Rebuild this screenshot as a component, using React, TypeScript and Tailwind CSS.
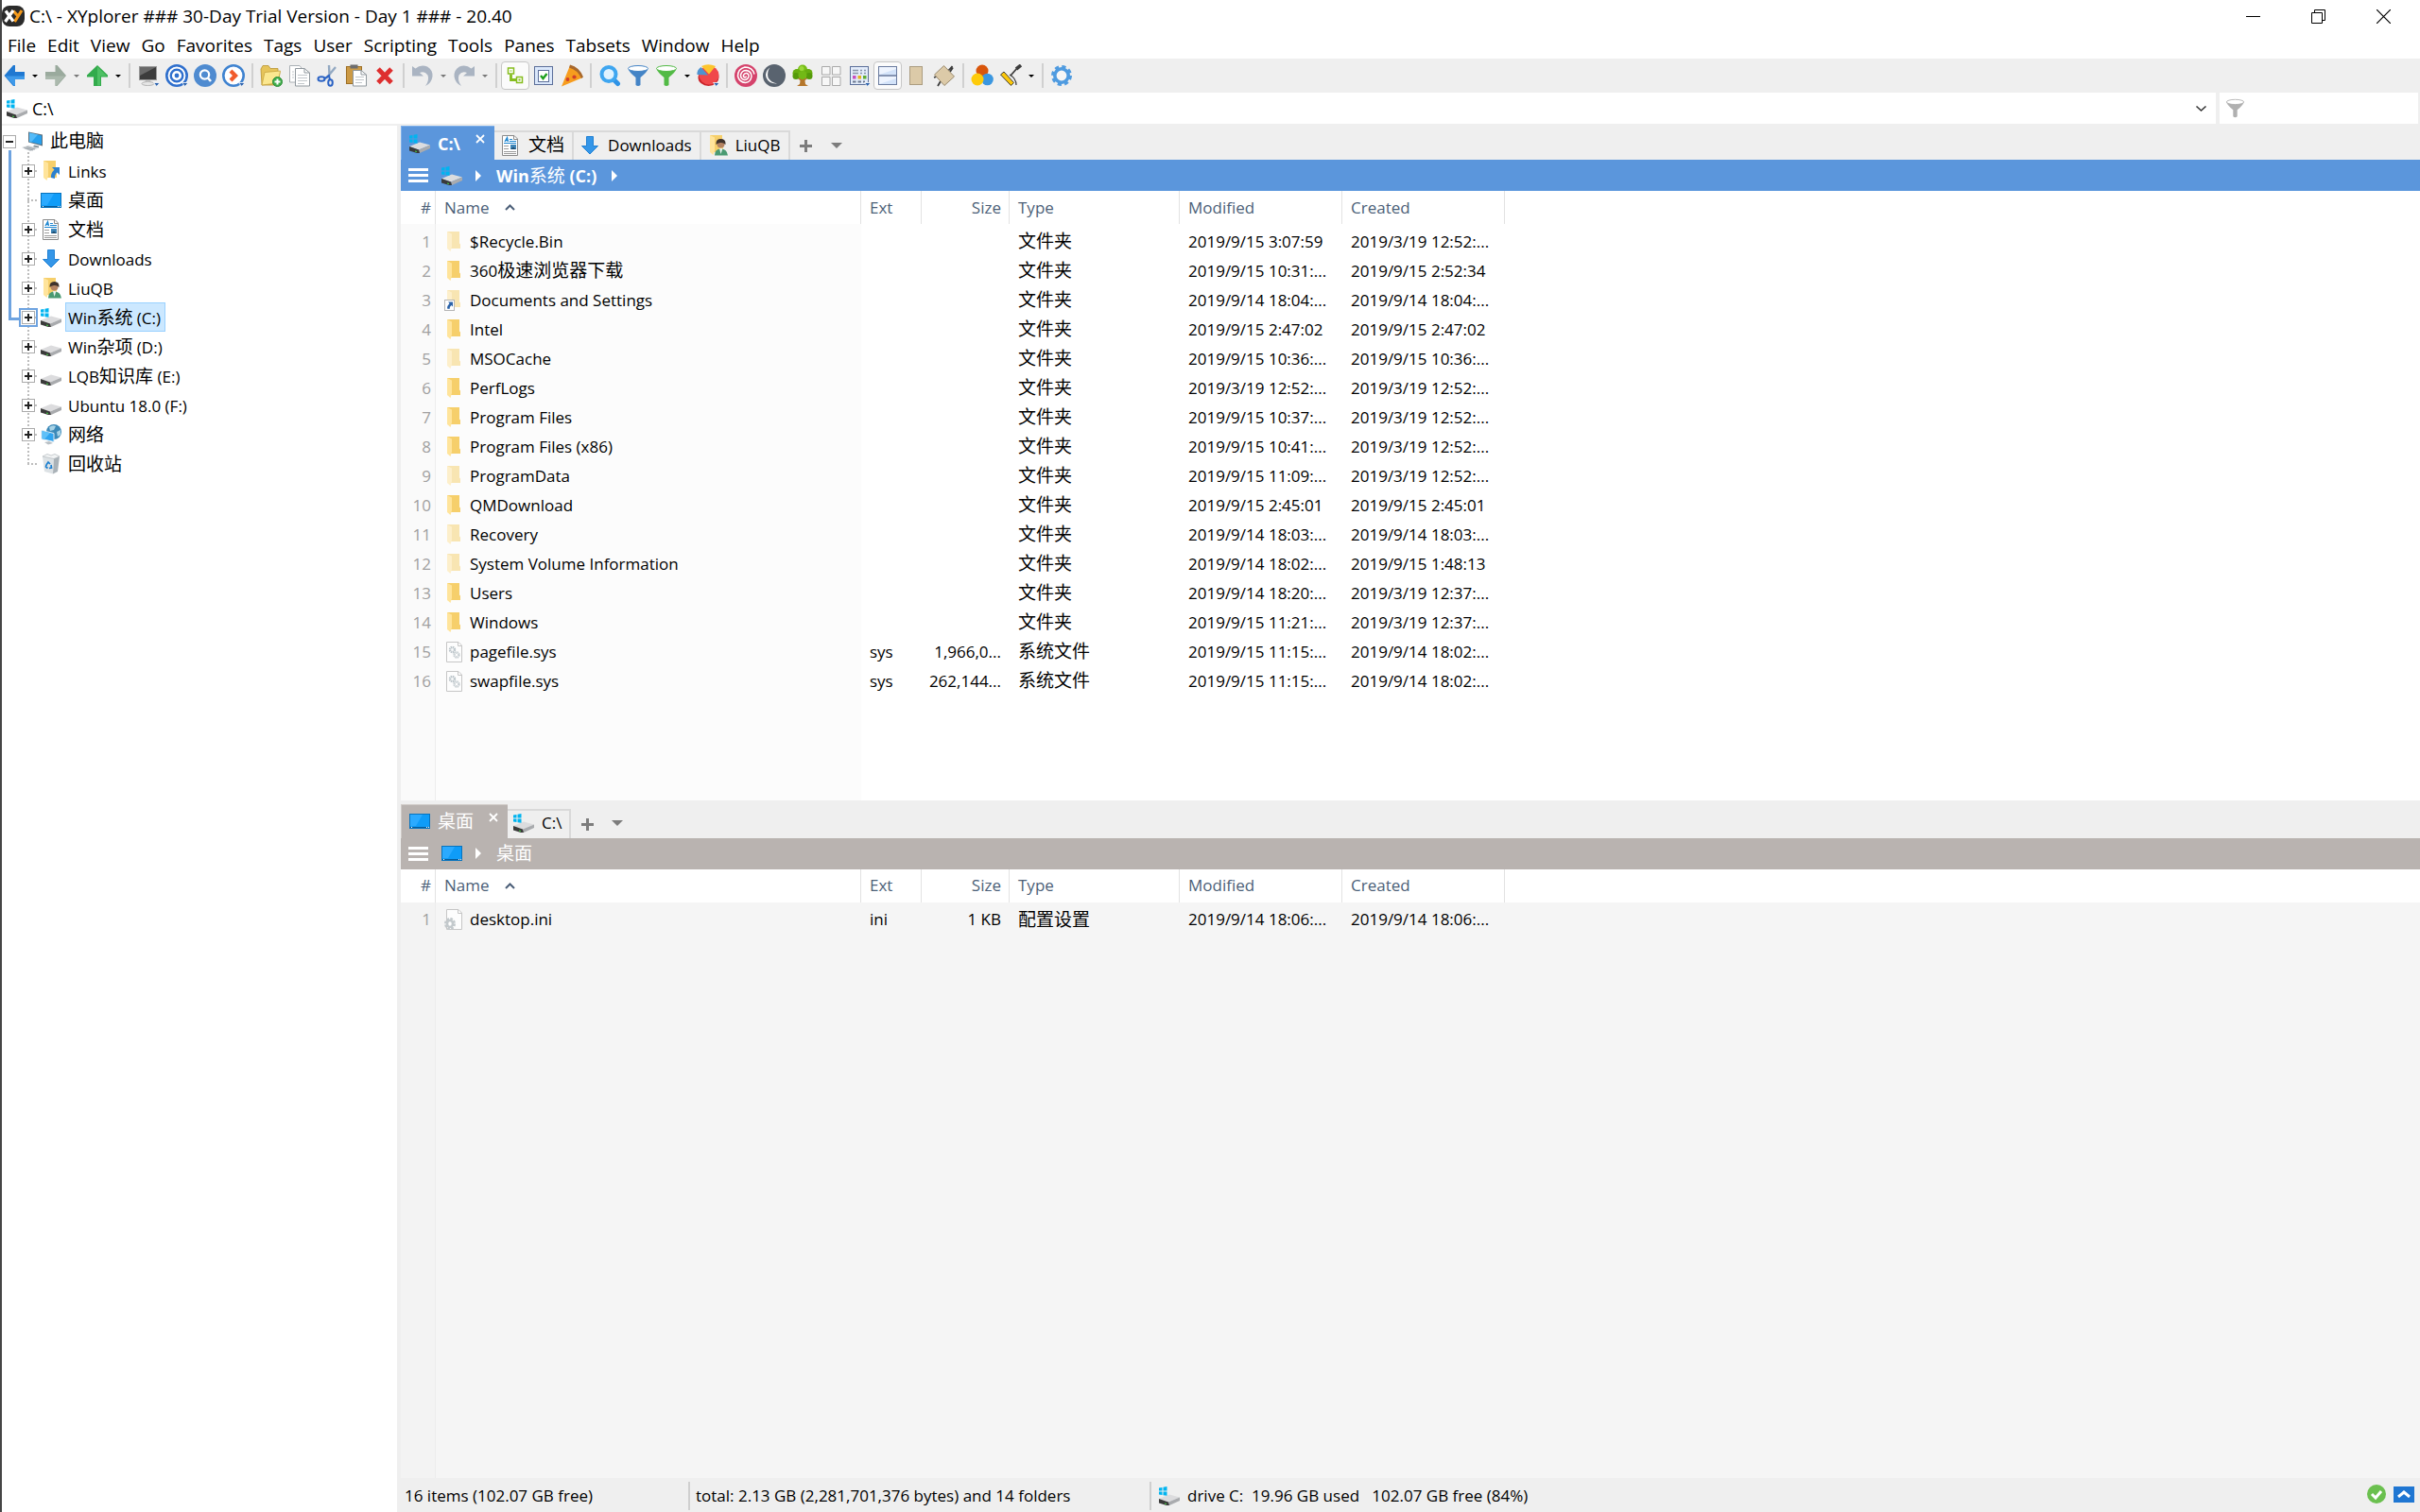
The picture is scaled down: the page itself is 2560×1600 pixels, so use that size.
import type { ReactNode } from 'react';
import clsx from 'clsx';

const menus = ['File', 'Edit', 'View', 'Go', 'Favorites', 'Tags', 'User', 'Scripting', 'Tools', 'Panes', 'Tabsets', 'Window', 'Help'];

type IconProps = { className?: string };

function Svg({ children, className = 'size-6', box = '0 0 24 24' }: { children: ReactNode; className?: string; box?: string }) {
  return (
    <svg viewBox={box} className={clsx('shrink-0', className)} fill="none" aria-hidden="true">
      {children}
    </svg>
  );
}

// Chinese runs are set a little larger than the Latin text around them
function Label({ text }: { text: string }) {
  return (
    <span className="whitespace-pre">
      {text.split(/([\u4e00-\u9fff]+)/).map((part, i) =>
        i % 2 ? (
          <span key={i} className="text-[19px] font-normal">
            {part}
          </span>
        ) : (
          part
        )
      )}
    </span>
  );
}

// ---------- file and place icons ----------

function DriveIcon({ windows, className = 'size-[22px]' }: IconProps & { windows?: boolean }) {
  return (
    <Svg className={className} box="0 0 22 22">
      <path d="M0 14 11 9.500 22 12.500 10 17.500Z" fill="#dcdcde" />
      <path d="M10 17.500 22 12.500V16L11 21Z" fill="#a9abae" />
      <path d="M0 14 10 17.500 11 21 8 21 0 18.500Z" fill="#3a3a3a" />
      <path d="M6 18.400 8 19V20L6 19.400Z" fill="#43d243" />
      {windows && (
        <path d="M0 2.500 3.500 2V5.500H0ZM4.500 1.800 8.500 1V5.500H4.500ZM0 6.500H3.500V10L0 9.500ZM4.500 6.500H8.500V10.800L4.500 10.200Z" fill="#00b4f0" />
      )}
    </Svg>
  );
}

function DesktopIcon() {
  return (
    <Svg className="size-[22px]" box="0 0 22 22">
      <rect x="0.500" y="3.500" width="21" height="15" fill="#0f9cf8" stroke="#0873bd" />
      <path d="M1 4H14L7 16H1Z" fill="#2baaff" />
      <path d="M1 17.500H21" stroke="#075c9c" />
      <path d="M2 17.500H3M18 17.500H19M20 17.500H21" stroke="#fff" />
    </Svg>
  );
}

function DocumentsIcon() {
  return (
    <Svg className="size-[22px]" box="0 0 22 22">
      <path d="M2.500 0.500H15L18.500 4V21.500H2.500Z" fill="#fff" stroke="#8b8b8b" />
      <path d="M14.500 0.500V4.500H18.500" stroke="#8b8b8b" />
      <path d="M5 7 7.500 2.500 8.500 7M6 5.500H8" stroke="#1e86d0" strokeWidth="1.300" />
      <path d="M10 4.500H13M10 6.500H17M4 8.500H17" stroke="#1e86d0" />
      <rect x="11" y="10" width="6" height="5" fill="#3f86b8" />
      <path d="M11 15 14 12.500 17 15Z" fill="#1f4e73" />
      <path d="M4 11.500H9M4 14.500H9M4 17.500H17M4 19.500H17" stroke="#9c9c9c" />
    </Svg>
  );
}

function DownloadsIcon() {
  return (
    <Svg className="size-[22px]" box="0 0 22 22">
      <path d="M7.500 1.500H14.500V11.500H19.500L11 20 2.500 11.500H7.500Z" fill="#3496e8" stroke="#2181d4" />
    </Svg>
  );
}

function FolderShape({ faded }: { faded?: boolean }) {
  return (
    <g opacity={faded ? 0.5 : 1}>
      <path d="M3 0H16V12.500L17 13.500V18H3Z" fill="#f6cf6b" />
      <path d="M3 0 8 2.500V16L6.500 21 3 18Z" fill="#ffe49b" />
    </g>
  );
}

function LinksIcon() {
  return (
    <Svg className="size-[22px]" box="0 0 22 22">
      <FolderShape />
      <path d="M12 7H20V15L17.500 12.500Q14.500 15 15 19L11 18Q10.500 13.500 14.500 9.500Z" fill="#2b80cf" />
    </Svg>
  );
}

function UserIcon() {
  return (
    <Svg className="size-[22px]" box="0 0 22 22">
      <FolderShape />
      <path d="M8 21.500Q8 14.500 14.500 14.500T22 21.500Z" fill="#4a9a72" />
      <path d="M13 14 14.500 20 16.500 14Z" fill="#e9f2ee" />
      <circle cx="14.500" cy="9.500" r="4" fill="#b58463" />
      <path d="M9.500 10Q9 4 14.500 4T19.500 10Q17 7.500 14 8T9.500 10Z" fill="#3f332d" />
    </Svg>
  );
}

function FolderIcon({ faded, link }: { faded?: boolean; link?: boolean }) {
  return (
    <Svg className="size-[22px]" box="0 0 22 22">
      <FolderShape faded={faded} />
      {link && (
        <>
          <rect x="0.500" y="10.500" width="10" height="11" fill="#fff" stroke="#b5b5b5" />
          <path d="M4 12.500H9V17.500L7.500 16Q5.500 17.500 5.500 20L3 19.500Q3 16.500 5.500 14Z" fill="#2a62a8" />
        </>
      )}
    </Svg>
  );
}

function SysFileIcon({ ini }: { ini?: boolean }) {
  return (
    <Svg className="size-[22px]" box="0 0 22 22">
      <path d="M2.500 0.500H15L18.500 4V21.500H2.500Z" fill="#fdfdfd" stroke="#c6c6c6" />
      <path d="M14.500 0.500V4.500H18.500" stroke="#c6c6c6" />
      {ini ? (
        <>
          <ellipse cx="6" cy="15.500" rx="4.500" ry="5" stroke="#c3c9cc" strokeWidth="3" strokeDasharray="2.400 1.300" />
          <ellipse cx="6" cy="15.500" rx="3" ry="3.500" stroke="#c3c9cc" strokeWidth="2.500" fill="#fff" />
        </>
      ) : (
        <>
          <circle cx="8.500" cy="8.500" r="2.500" stroke="#bcc5ca" strokeWidth="2.500" strokeDasharray="1.400 0.560" />
          <circle cx="13" cy="14" r="2.500" stroke="#c8cfd3" strokeWidth="2.500" strokeDasharray="1.400 0.560" />
        </>
      )}
    </Svg>
  );
}

function ComputerIcon() {
  return (
    <Svg className="size-[23px]" box="0 0 23 22">
      <path d="M7 1 22 4V16L7 12Z" fill="#5d6f7c" />
      <path d="M8 2 21 5V14.500L8 11.500Z" fill="#27a0ee" />
      <path d="M8 2 17 4 10 12 8 11.500Z" fill="#55bbf8" />
      <path d="M13 15 18 16V18L12 17Z" fill="#8a979f" />
      <path d="M0 17.500 7 15.500 17 18.500 9 21.500Z" fill="#c9ced2" />
      <path d="M2.500 18 12 20.500M5 17 14 19.500" stroke="#8f989e" strokeWidth="0.800" />
    </Svg>
  );
}

function NetworkIcon() {
  return (
    <Svg className="size-[22px]" box="0 0 22 22">
      <circle cx="14" cy="8" r="8" fill="#3c89b8" />
      <path d="M9 3Q13 0 16 2L14 6 10 7ZM17 8 21 6V11L18 13Z" fill="#a9d3e6" />
      <path d="M1 6.500 14 9.500V18.500L1 15.500Z" fill="#2fa4f0" stroke="#dfeaf2" />
      <path d="M1.500 7 10 9 4 16 1.500 15.500Z" fill="#5fc0f8" />
      <path d="M4 19 9 18 13 20 8 21.500Z" fill="#b9c0c5" />
    </Svg>
  );
}

function RecycleIcon() {
  return (
    <Svg className="size-[22px]" box="0 0 22 22">
      <path d="M2 3 14 5 13 21.500 4 19Z" fill="#dde2e5" />
      <path d="M14 5 20 3 18 19 13 21.500Z" fill="#aab2b8" />
      <path d="M2 3 7 0.500 11 2 15 0.500 20 3 14 5.500Z" fill="#f2f4f5" stroke="#b3b9bd" strokeWidth="0.700" />
      <path d="M6 12 8 9 10 11M11 12 11.500 15 9 15.500M7.500 15.500 5.500 14 6 12" stroke="#1c7fd0" strokeWidth="1.700" />
    </Svg>
  );
}

// ---------- toolbar icons ----------

const MiniDrop = () => <path d="M17.500 19.500H24L20.750 23.500Z" fill="#2c62ad" stroke="#fff" strokeWidth="0.800" />;

function BackIcon() {
  return (
    <Svg>
      <path d="M1.500 12 11 1H13V8H23V16H13V23H11Z" fill="#1f78d1" />
      <path d="M3 12.500H23V16H13V22.500H11.500Z" fill="#3e9aea" />
    </Svg>
  );
}

function ForwardIcon() {
  return (
    <Svg>
      <path d="M23 12 13.500 1H11.500V8H1V16H11.500V23H13.500Z" fill="#9aaa9d" />
      <path d="M21.500 12.500H1V16H11.500V22.500H13Z" fill="#abb9ad" />
    </Svg>
  );
}

function UpIcon() {
  return (
    <Svg>
      <path d="M12 1 23 11.500V13.500H16V23H8V13.500H1V11.500Z" fill="#33ab4c" />
      <path d="M12 2.500 22 12.500H15V22.500H12Z" fill="#4ec064" />
    </Svg>
  );
}

function MonitorIcon() {
  return (
    <Svg>
      <rect x="2.500" y="2.500" width="18" height="14" fill="#3c3c3c" stroke="#9a9a9a" />
      <path d="M3 3H20L3 12Z" fill="#696969" />
      <path d="M9 17H14L15 19H8Z" fill="#c6c6c6" />
      <ellipse cx="11.500" cy="20.500" rx="6.500" ry="2" fill="#e6e6e6" stroke="#b5b5b5" />
      <MiniDrop />
    </Svg>
  );
}

function TargetIcon() {
  return (
    <Svg>
      <circle cx="12" cy="12" r="10.700" stroke="#2f6fcd" strokeWidth="2.600" fill="#fff" />
      <circle cx="12" cy="12" r="6.300" stroke="#2f6fcd" strokeWidth="2.400" />
      <circle cx="12" cy="12" r="2.400" fill="#2f6fcd" />
      <MiniDrop />
    </Svg>
  );
}

function FindDiscIcon() {
  return (
    <Svg>
      <circle cx="12" cy="12" r="12" fill="#4f8bd0" />
      <circle cx="11.500" cy="11" r="4.700" stroke="#fff" strokeWidth="2.200" />
      <path d="M15 14.500 18 18" stroke="#fff" strokeWidth="2.600" />
    </Svg>
  );
}

function GoDiscIcon() {
  return (
    <Svg>
      <circle cx="12" cy="12" r="10.700" fill="#fff" stroke="#3f83d0" strokeWidth="2.600" />
      <path d="M7.500 8.500 10.500 5.500 17 12 10.500 18.500 7.500 15.500 11 12Z" fill="#f15a2b" />
      <MiniDrop />
    </Svg>
  );
}

function NewFolderIcon() {
  return (
    <Svg>
      <path d="M1 5 3 1.500H9L11 4.500H19V8H21L19 22H2Z" fill="#e6c45a" stroke="#b8932f" strokeWidth="0.800" />
      <path d="M2 22 5 8.500 21.500 7 19 20Z" fill="#fbe78f" stroke="#c9a640" strokeWidth="0.800" />
      <circle cx="18.500" cy="18.500" r="5" fill="#3fae49" stroke="#2c8a38" />
      <path d="M18.500 15.500V21.500M15.500 18.500H21.500" stroke="#fff" strokeWidth="2" />
    </Svg>
  );
}

function CopyIcon() {
  return (
    <Svg>
      <path d="M1.500 1.500H12L14 4V19H1.500Z" fill="#fff" stroke="#aab0b5" />
      <path d="M7.500 4.500H17L22.500 9V23H7.500Z" fill="#fff" stroke="#8f979d" />
      <path d="M17 4.500V9H22.500" stroke="#8f979d" />
      <path d="M10 11.500H20M10 14.500H20M10 17.500H20M10 20.500H17M4 8H6M4 11H6M4 14H6" stroke="#c2c7cb" />
    </Svg>
  );
}

function CutIcon() {
  return (
    <Svg>
      <path d="M13 1 13.500 12M20 3 10 15" stroke="#93a9c2" strokeWidth="2.400" />
      <ellipse cx="5" cy="15.500" rx="3.500" ry="2.200" stroke="#2a62c4" strokeWidth="2" />
      <ellipse cx="14.500" cy="19.500" rx="2.300" ry="3.200" stroke="#2a62c4" strokeWidth="2" />
      <path d="M8 15.500 13 12 14 16.500" stroke="#2a62c4" strokeWidth="2" />
    </Svg>
  );
}

function PasteIcon() {
  return (
    <Svg>
      <rect x="1.500" y="2.500" width="16" height="18" fill="#cc9a45" stroke="#9d6f25" />
      <rect x="5.500" y="0.500" width="8" height="4" fill="#6d6d6d" />
      <path d="M8.500 6.500H17L22.500 11V23H8.500Z" fill="#fff" stroke="#8f979d" />
      <path d="M17 6.500V11H22.500" stroke="#8f979d" />
      <path d="M11 13.500H20M11 16.500H20M11 19.500H18" stroke="#c2c7cb" />
    </Svg>
  );
}

function DeleteIcon() {
  return (
    <Svg>
      <path d="M5 5 19 19.500M19 5 5 19.500" stroke="#de2f2f" strokeWidth="5" />
    </Svg>
  );
}

function UndoIcon({ flip }: { flip?: boolean }) {
  return (
    <Svg>
      <g transform={flip ? 'translate(24 0) scale(-1 1)' : undefined}>
        <path d="M1 2 4.500 4.500Q10 0 17 2.500Q23 6 22.500 13Q21.500 20 15 23Q19.500 17 17.500 11.500Q14 6.500 9 9L13 12.500H1Z" fill="#aab4c2" />
      </g>
    </Svg>
  );
}

function TreeToggleIcon() {
  return (
    <Svg>
      <rect x="4.500" y="4" width="6" height="6" fill="#fff" stroke="#86bd1e" strokeWidth="1.500" />
      <path d="M6.500 7H8.500" stroke="#86bd1e" />
      <path d="M7.500 10.500V16.500H13" stroke="#86bd1e" strokeWidth="2.800" />
      <rect x="13.500" y="13.500" width="6" height="6" fill="#fff" stroke="#86bd1e" strokeWidth="1.500" />
      <rect x="15.500" y="15.500" width="2" height="2" fill="#86bd1e" />
    </Svg>
  );
}

function CheckBoxIcon() {
  return (
    <Svg>
      <rect x="2.500" y="2.500" width="19" height="19" fill="#dbe8fb" stroke="#5c6f9a" />
      <rect x="6.500" y="6.500" width="11" height="12" fill="#fff" stroke="#5c6f9a" />
      <path d="M9 12 11.500 15 15.500 10" stroke="#1fa01f" strokeWidth="2.400" />
    </Svg>
  );
}

function PizzaIcon() {
  return (
    <Svg>
      <path d="M1 23.500 9.500 2.500Q18 5 22.500 14.500Z" fill="#f79d1e" />
      <path d="M10 0.500Q20 3 24 13.500L22 15Q18 6 9 3.500Z" fill="#a8682c" />
      <circle cx="14.500" cy="13.500" r="2.100" fill="#d2402a" />
      <circle cx="7.500" cy="16" r="1.900" fill="#d2402a" />
    </Svg>
  );
}

function SearchIcon() {
  return (
    <Svg>
      <path d="M16 16 20.500 20.500" stroke="#2f93e6" strokeWidth="5" strokeLinecap="round" />
      <circle cx="11" cy="10.500" r="7.500" fill="#dff2ff" stroke="#3fa6f0" strokeWidth="4" />
    </Svg>
  );
}

function FunnelIcon({ color, className }: IconProps & { color: string }) {
  return (
    <Svg className={className}>
      <path d="M1.500 4.500Q2 8 9.500 14V22Q12 24 14.500 22V14Q22 8 22.500 4.500Z" fill={color} />
      <ellipse cx="12" cy="4.500" rx="10.500" ry="3" fill="#fff" stroke={color} />
    </Svg>
  );
}

function PieIcon() {
  return (
    <Svg>
      <ellipse cx="12.500" cy="14" rx="11" ry="9" fill="#c9242a" />
      <ellipse cx="13" cy="11.500" rx="10.500" ry="10" fill="#f0474a" />
      <path d="M0.500 11Q0 6 4.500 3L12 11.500Z" fill="#4e93d0" />
      <path d="M13 10.500 5 2Q12-1.500 20 2Z" fill="#fcc52c" />
      <MiniDrop />
    </Svg>
  );
}

function SpiralIcon() {
  return (
    <Svg>
      <circle cx="12" cy="12" r="12" fill="#d5436c" />
      <path
        d="M12 12.500Q12.500 14 11 14Q9 13.500 9.500 11.500Q10.500 9 13 9.500Q15.500 10.500 15 13Q14 16.500 10.500 16.500Q6.500 15.500 6.500 11.500Q7.500 6.500 12.500 6.500Q18 7.500 18 13Q17 19 11.500 19.500Q5 19 3.500 12.500Q3.500 5 11 3Q19 3 21 10.500"
        stroke="#fff"
        strokeWidth="1.500"
      />
    </Svg>
  );
}

function MoonIcon() {
  return (
    <Svg>
      <circle cx="12" cy="12" r="12" fill="#59636f" />
      <path d="M7.500 3.500Q1.500 8 3.500 14Q6.500 21 15 20.500Q8 19 5.500 14Q4 8 7.500 3.500Z" fill="#fff" />
    </Svg>
  );
}

function TreeIcon() {
  return (
    <Svg>
      <path d="M10 14H14L15 21 18 23H6L9 21Z" fill="#b5762b" />
      <path d="M6 13 12 18 18 13" stroke="#b5762b" strokeWidth="1.800" />
      <circle cx="12" cy="5.500" r="5" fill="#76bd16" />
      <circle cx="6" cy="9.500" r="4.500" fill="#67ad10" />
      <circle cx="18" cy="9.500" r="4.500" fill="#67ad10" />
      <circle cx="5" cy="12.500" r="3.500" fill="#559a0a" />
      <circle cx="19" cy="12.500" r="3.500" fill="#559a0a" />
      <circle cx="12" cy="11.500" r="4.500" fill="#72b916" />
      <circle cx="11" cy="4.500" r="2.500" fill="#9ad83a" />
    </Svg>
  );
}

function QuadIcon() {
  return (
    <Svg>
      <path d="M2.500 2.500H11V11H2.500ZM13.500 2.500H22V11H13.500ZM2.500 13.500H11V22.500H2.500ZM13.500 13.500H22V22.500H13.500Z" fill="#f7f7f7" stroke="#a9a9a9" />
    </Svg>
  );
}

function DetailsIcon() {
  return (
    <Svg>
      <rect x="2.500" y="2.500" width="19" height="19" fill="#e3ecfa" stroke="#5c6f9a" />
      <path d="M5 6.500H11M5 9.500H11M13 6.500H15M17 6.500H19M13 9.500H15M17 9.500H19" stroke="#8b97ab" strokeWidth="1.600" />
      <rect x="5" y="12" width="3.500" height="3.500" fill="#c84fc0" />
      <rect x="10.500" y="12" width="3.500" height="3.500" fill="#e8b21c" />
      <rect x="16" y="12" width="3.500" height="3.500" fill="#5fae33" />
      <path d="M5 18.500H8.500M10.500 18.500H14M16 18.500H18" stroke="#6c7890" strokeWidth="2" />
      <MiniDrop />
    </Svg>
  );
}

function SplitIcon() {
  return (
    <Svg>
      <rect x="2.500" y="2.500" width="19" height="19" fill="#eef4fe" stroke="#6b7c9f" />
      <path d="M3 11 21 5V11ZM3 21 21 15V21Z" fill="#d3e3f9" />
      <path d="M3 12H21" stroke="#6b7c9f" strokeWidth="1.600" />
    </Svg>
  );
}

function PaneIcon() {
  return (
    <Svg>
      <rect x="5.500" y="2.500" width="13" height="19" fill="#dccaa8" stroke="#ab9c80" />
    </Svg>
  );
}

function DiamondIcon() {
  return (
    <Svg>
      <path d="M1 14 7 12M5 23 8 18M16 7 20.500 2M18 8 21 3.500" stroke="#3c3c3c" strokeWidth="1.800" />
      <path d="M11.500 1.500 22.500 13 12 22.500 1.500 11Z" fill="#dccaa8" stroke="#9a8b6f" />
    </Svg>
  );
}

function ColorsIcon() {
  return (
    <Svg>
      <circle cx="12" cy="7" r="6.500" fill="#d9560b" />
      <circle cx="17.500" cy="16" r="6.300" fill="#3b97e0" />
      <circle cx="7" cy="16" r="6.500" fill="#fecb0a" />
    </Svg>
  );
}

function BrushIcon() {
  return (
    <Svg>
      <path d="M12 12 20 3" stroke="#3c3c3c" strokeWidth="1.800" />
      <path d="M18 5 23 1" stroke="#3c3c3c" strokeWidth="3.600" />
      <path d="M11 11Q18 15 18 22" stroke="#3c3c3c" strokeWidth="1.200" />
      <path d="M1.500 11 5 8 15.500 19.500 12.500 22.500Z" fill="#fcc80b" stroke="#3c3c3c" />
    </Svg>
  );
}

function GearIcon() {
  return (
    <Svg>
      <circle cx="12" cy="12" r="9.500" stroke="#4f9be0" strokeWidth="3" strokeDasharray="4.200 3.260" />
      <circle cx="12" cy="12" r="7.200" stroke="#4f9be0" strokeWidth="3.600" fill="#f6f6f6" />
    </Svg>
  );
}

type Tool = { label: string; icon: ReactNode; drop?: boolean; dim?: boolean; pressed?: boolean };

const toolGroups: Tool[][] = [
  [
    { label: 'Back', icon: <BackIcon />, drop: true },
    { label: 'Forward', icon: <ForwardIcon />, drop: true, dim: true },
    { label: 'Up', icon: <UpIcon />, drop: true },
  ],
  [
    { label: 'Drives', icon: <MonitorIcon /> },
    { label: 'Hotlist', icon: <TargetIcon /> },
    { label: 'Go to', icon: <FindDiscIcon /> },
    { label: 'Recent locations', icon: <GoDiscIcon /> },
  ],
  [
    { label: 'New folder', icon: <NewFolderIcon /> },
    { label: 'Copy', icon: <CopyIcon /> },
    { label: 'Cut', icon: <CutIcon /> },
    { label: 'Paste', icon: <PasteIcon /> },
    { label: 'Delete', icon: <DeleteIcon /> },
  ],
  [
    { label: 'Undo', icon: <UndoIcon />, drop: true, dim: true },
    { label: 'Redo', icon: <UndoIcon flip />, drop: true, dim: true },
  ],
  [
    { label: 'Mini tree', icon: <TreeToggleIcon />, pressed: true },
    { label: 'Checkbox selection', icon: <CheckBoxIcon /> },
    { label: 'Pizza', icon: <PizzaIcon /> },
  ],
  [
    { label: 'Find files', icon: <SearchIcon /> },
    { label: 'Visual filter', icon: <FunnelIcon color="#4484c6" /> },
    { label: 'Toggle filter', icon: <FunnelIcon color="#52ba45" />, drop: true },
    { label: 'Statistics', icon: <PieIcon /> },
  ],
  [
    { label: 'Ghost filter', icon: <SpiralIcon /> },
    { label: 'Dark mode', icon: <MoonIcon /> },
    { label: 'Show tree', icon: <TreeIcon /> },
    { label: 'Thumbnails', icon: <QuadIcon /> },
    { label: 'Views', icon: <DetailsIcon /> },
    { label: 'Dual pane', icon: <SplitIcon />, pressed: true },
    { label: 'Single pane', icon: <PaneIcon /> },
    { label: 'Rotate panes', icon: <DiamondIcon /> },
  ],
  [
    { label: 'Color filters', icon: <ColorsIcon /> },
    { label: 'Highlight', icon: <BrushIcon />, drop: true },
  ],
  [{ label: 'Configuration', icon: <GearIcon /> }],
];

function Toolbar() {
  return (
    <div className="flex h-9 items-center bg-[#efefef]">
      {toolGroups.map((group, i) => (
        <div key={i} className="flex items-center">
          {i > 0 && <span className="mx-1 h-[26px] w-0.5 bg-[#d0d0d0]" />}
          {group.map((tool) => (
            <div key={tool.label} className="flex items-center">
              <button
                aria-label={tool.label}
                className={clsx(
                  'flex h-[30px] w-[30px] items-center justify-center',
                  tool.pressed && 'rounded-sm border border-[#c6c6c6] bg-[#fbfbfb]'
                )}
              >
                {tool.icon}
              </button>
              {tool.drop && (
                <button aria-label={`${tool.label} menu`} className="flex h-[30px] w-3.5 items-center justify-center">
                  <Svg className="h-[3px] w-[6px]" box="0 0 6 3">
                    <path d="M0 0H6L3 3Z" fill={tool.dim ? '#777' : '#000'} />
                  </Svg>
                </button>
              )}
            </div>
          ))}
        </div>
      ))}
    </div>
  );
}

// ---------- tree ----------

const treeNodes = [
  { name: 'Links', icon: <LinksIcon />, expandable: true },
  { name: '桌面', icon: <DesktopIcon />, expandable: false },
  { name: '文档', icon: <DocumentsIcon />, expandable: true },
  { name: 'Downloads', icon: <DownloadsIcon />, expandable: true },
  { name: 'LiuQB', icon: <UserIcon />, expandable: true },
  { name: 'Win系统 (C:)', icon: <DriveIcon windows />, expandable: true, selected: true },
  { name: 'Win杂项 (D:)', icon: <DriveIcon />, expandable: true },
  { name: 'LQB知识库 (E:)', icon: <DriveIcon />, expandable: true },
  { name: 'Ubuntu 18.0 (F:)', icon: <DriveIcon />, expandable: true },
  { name: '网络', icon: <NetworkIcon />, expandable: true },
  { name: '回收站', icon: <RecycleIcon />, expandable: false },
];

function Expander({ open, marked }: { open?: boolean; marked?: boolean }) {
  return (
    <button
      aria-label={open ? 'Collapse' : 'Expand'}
      className={clsx(
        'relative flex size-3.5 shrink-0 items-center justify-center border border-[#ababab] bg-white',
        marked && 'outline-2 outline-offset-1 outline-[#6ea3e0]'
      )}
    >
      <span className="absolute h-0.5 w-2 bg-[#222]" />
      {!open && <span className="absolute h-2 w-0.5 bg-[#222]" />}
    </button>
  );
}

function FolderTree() {
  return (
    <nav className="w-[420px] shrink-0 bg-white pt-px">
      <div className="flex h-[31px] items-center pl-[3px]">
        <Expander open />
        <span className="ml-1.5 flex items-center gap-[7px]">
          <ComputerIcon />
          <Label text="此电脑" />
        </span>
      </div>
      <ul className="relative">
        {/* guide lines: dotted for the branch, solid for the current path */}
        <li aria-hidden="true" className="absolute -top-1 bottom-4 left-[29px] w-0.5 bg-[repeating-linear-gradient(to_bottom,#bdbdbd_0_2px,transparent_2px_4px)]" />
        <li aria-hidden="true" className="absolute -top-1.5 left-[9px] h-[180px] w-3 border-b-3 border-l-3 border-[#6ea3e0]" />
        {treeNodes.map((node) => (
          <li key={node.name} className="relative flex h-[31px] items-center pl-[23px]">
            <span className="absolute left-[29px] h-0.5 w-2.5 bg-[repeating-linear-gradient(to_right,#bdbdbd_0_2px,transparent_2px_4px)]" />
            {node.expandable ? <Expander marked={node.selected} /> : <span className="w-3.5 shrink-0" />}
            <span className="ml-1.5 flex">{node.icon}</span>
            <a
              href="#"
              className={clsx(
                'ml-1 flex h-[31px] items-center border px-0.5 pt-0.5 pr-1',
                node.selected ? 'border-[#99d1ff] bg-[#cce8ff]' : 'border-transparent'
              )}
            >
              <Label text={node.name} />
            </a>
          </li>
        ))}
      </ul>
    </nav>
  );
}

// ---------- file panes ----------

type FileRow = { name: string; icon: ReactNode; ext?: string; size?: string; type: string; modified: string; created: string };

const folder = (name: string, modified: string, created: string, faded = false, link = false): FileRow => ({
  name,
  icon: <FolderIcon faded={faded} link={link} />,
  type: '文件夹',
  modified,
  created,
});

const driveFiles: FileRow[] = [
  folder('$Recycle.Bin', '2019/9/15 3:07:59', '2019/3/19 12:52:...', true),
  folder('360极速浏览器下载', '2019/9/15 10:31:...', '2019/9/15 2:52:34'),
  folder('Documents and Settings', '2019/9/14 18:04:...', '2019/9/14 18:04:...', true, true),
  folder('Intel', '2019/9/15 2:47:02', '2019/9/15 2:47:02'),
  folder('MSOCache', '2019/9/15 10:36:...', '2019/9/15 10:36:...', true),
  folder('PerfLogs', '2019/3/19 12:52:...', '2019/3/19 12:52:...'),
  folder('Program Files', '2019/9/15 10:37:...', '2019/3/19 12:52:...'),
  folder('Program Files (x86)', '2019/9/15 10:41:...', '2019/3/19 12:52:...'),
  folder('ProgramData', '2019/9/15 11:09:...', '2019/3/19 12:52:...', true),
  folder('QMDownload', '2019/9/15 2:45:01', '2019/9/15 2:45:01'),
  folder('Recovery', '2019/9/14 18:03:...', '2019/9/14 18:03:...', true),
  folder('System Volume Information', '2019/9/14 18:02:...', '2019/9/15 1:48:13', true),
  folder('Users', '2019/9/14 18:20:...', '2019/3/19 12:37:...'),
  folder('Windows', '2019/9/15 11:21:...', '2019/3/19 12:37:...'),
  { name: 'pagefile.sys', icon: <SysFileIcon />, ext: 'sys', size: '1,966,0...', type: '系统文件', modified: '2019/9/15 11:15:...', created: '2019/9/14 18:02:...' },
  { name: 'swapfile.sys', icon: <SysFileIcon />, ext: 'sys', size: '262,144...', type: '系统文件', modified: '2019/9/15 11:15:...', created: '2019/9/14 18:02:...' },
];

const desktopFiles: FileRow[] = [
  { name: 'desktop.ini', icon: <SysFileIcon ini />, ext: 'ini', size: '1 KB', type: '配置设置', modified: '2019/9/14 18:06:...', created: '2019/9/14 18:06:...' },
];

function FileTable({ rows, active }: { rows: FileRow[]; active: boolean }) {
  const numBg = active ? 'bg-[#fafafa]' : 'bg-[#f3f3f3]';
  const nameBg = active ? 'bg-[#fcfcfc]' : 'bg-[#f5f5f5]';
  const restBg = active ? 'bg-white' : 'bg-[#f5f5f5]';
  const head = 'border-r border-[#e2e2e2] px-[9px] font-normal';

  return (
    <div className={clsx('flex min-h-0 flex-1', restBg)}>
      <table className="w-full table-fixed border-separate border-spacing-0 text-left whitespace-nowrap">
        <colgroup>
          <col className="w-[37px]" />
          <col className="w-[450px]" />
          <col className="w-16" />
          <col className="w-[93px]" />
          <col className="w-[180px]" />
          <col className="w-[172px]" />
          <col className="w-[172px]" />
          <col />
        </colgroup>
        <thead>
          <tr className="h-[35px] bg-white text-[#4c5f78]">
            <th className="border-r border-[#e2e2e2] pr-1 text-right font-normal">#</th>
            <th className={head}>
              <span className="flex items-center gap-4">
                Name
                <Svg className="h-[7px] w-[11px]" box="0 0 11 7">
                  <path d="M1 6 5.500 1.500 10 6" stroke="#4c5f78" strokeWidth="2" />
                </Svg>
              </span>
            </th>
            <th className={head}>Ext</th>
            <th className="border-r border-[#e2e2e2] pr-2 text-right font-normal">Size</th>
            <th className={head}>Type</th>
            <th className={head}>Modified</th>
            <th className={head}>Created</th>
            <th />
          </tr>
        </thead>
        <tbody>
          <tr className="h-[3px]">
            <td className={clsx('border-r border-[#ececec]', numBg)} />
            <td className={nameBg} />
            <td colSpan={6} />
          </tr>
          {rows.map((row, i) => (
            <tr key={row.name} className="h-[31px]">
              <td className={clsx('border-r border-[#ececec] pr-1 text-right text-[#a0a0a0]', numBg)}>{i + 1}</td>
              <td className={clsx('pl-[9px]', nameBg)}>
                <span className="flex items-center gap-[5px]">
                  {row.icon}
                  <Label text={row.name} />
                </span>
              </td>
              <td className="px-[9px]">{row.ext}</td>
              <td className="pr-[9px] text-right">{row.size}</td>
              <td className="px-[9px]">
                <Label text={row.type} />
              </td>
              <td className="px-[9px]">{row.modified}</td>
              <td className="px-[9px]">{row.created}</td>
              <td />
            </tr>
          ))}
          <tr>
            <td className={clsx('border-r border-[#ececec]', numBg)} />
            <td className={nameBg} />
            <td colSpan={6} />
          </tr>
        </tbody>
      </table>
    </div>
  );
}

function Chevron() {
  return (
    <Svg className="h-3 w-1.5" box="0 0 6 12">
      <path d="M0 0 6 6 0 12Z" fill="#fff" />
    </Svg>
  );
}

type Tab = { name: string; icon: ReactNode };
type PaneProps = { active: boolean; current: Tab; tabs: Tab[]; crumb: string; more?: boolean; rows: FileRow[] };

function Pane({ active, current, tabs, crumb, more, rows }: PaneProps) {
  const tone = active ? 'bg-[#5b96dc]' : 'bg-[#b9b3b0]';

  return (
    <section className="flex min-h-0 flex-1 flex-col">
      <div className="flex h-9 items-end">
        <div
          className={clsx(
            'flex h-9 items-center border-t border-l pl-2 text-[18px] font-bold text-white',
            active ? 'border-[#7fb0ea]' : 'border-[#d0cbc8]',
            tone
          )}
        >
          {current.icon}
          <button className="ml-2">
            <Label text={current.name} />
          </button>
          <button aria-label="Close tab" className="mt-1 mr-1.5 ml-3 self-start p-1">
            <Svg className="size-2.5" box="0 0 10 10">
              <path d="M1 1 9 9M9 1 1 9" stroke="#fff" strokeWidth="1.800" />
            </Svg>
          </button>
        </div>
        {tabs.map((tab) => (
          <button key={tab.name} className="flex h-[31px] items-center gap-2 border-t-2 border-r-2 border-[#d9d9d9] pr-2 pb-0.5 pl-1.5">
            {tab.icon}
            <Label text={tab.name} />
          </button>
        ))}
        <button aria-label="New tab" className="flex h-[31px] w-[34px] items-center justify-center pt-0.5">
          <Svg className="size-[13px]" box="0 0 13 13">
            <path d="M6.500 0V13M0 6.500H13" stroke="#7d7d7d" strokeWidth="3" />
          </Svg>
        </button>
        <button aria-label="Tab list" className="flex h-[31px] w-[30px] items-center justify-center">
          <Svg className="h-1.5 w-3" box="0 0 12 6">
            <path d="M0 0H12L6 6Z" fill="#7d7d7d" />
          </Svg>
        </button>
      </div>

      <div className={clsx('flex h-[33px] items-center pl-2 text-[18px] font-bold text-white', tone)}>
        <button aria-label="Pane menu" className="flex w-[21px] flex-col gap-[3px]">
          <span className="h-[3px] bg-white" />
          <span className="h-[3px] bg-white" />
          <span className="h-[3px] bg-white" />
        </button>
        <span className="ml-3.5">{current.icon}</span>
        <span className="ml-3.5">
          <Chevron />
        </span>
        <a href="#" className="mx-4">
          <Label text={crumb} />
        </a>
        {more && <Chevron />}
      </div>

      <FileTable rows={rows} active={active} />
    </section>
  );
}

function StatusBar() {
  return (
    <footer className="flex h-9 shrink-0 items-center pt-0.5">
      <span className="w-[304px] pl-1">16 items (102.07 GB free)</span>
      <span className="flex h-[30px] w-[488px] items-center border-l-2 border-[#cfcfcf] pl-1.5">
        total: 2.13 GB (2,281,701,376 bytes) and 14 folders
      </span>
      <span className="flex h-[30px] items-center border-l-2 border-[#cfcfcf] pl-2 whitespace-pre">
        <DriveIcon windows />
        <span className="ml-2">drive C:  19.96 GB used   102.07 GB free (84%)</span>
      </span>
      <span className="mr-1.5 mb-1 ml-auto flex items-center gap-2">
        <Svg className="size-5" box="0 0 20 20">
          <circle cx="10" cy="10" r="10" fill="#6bc04f" />
          <path d="M5 10 9 14 15 7" stroke="#fff" strokeWidth="3" />
        </Svg>
        <button aria-label="Show info panel" className="flex h-[17px] w-[22px] items-center justify-center bg-[#1f76d2]">
          <Svg className="h-2 w-3.5" box="0 0 14 8">
            <path d="M1 7 7 2 13 7" stroke="#fff" strokeWidth="3" />
          </Svg>
        </button>
      </span>
    </footer>
  );
}

export default function App() {
  return (
    <div className="relative flex h-screen flex-col overflow-hidden bg-[#efefef] font-['Open_Sans','Noto_Sans_CJK_SC',sans-serif] text-[17px] leading-6 text-black">
      <header className="bg-white text-[19px]">
        <div className="flex h-[34px] items-center pr-1">
          <Svg className="ml-0.5 size-6">
            <rect y="1" width="24" height="22" rx="8" fill="#2b2b2b" />
            <path d="M12 6.500 17.500 12.500M21 6 13.500 18" stroke="#f59a1b" strokeWidth="3.200" />
            <path d="M4 6.500 12 17.500M12 6 3.500 18" stroke="#fff" strokeWidth="3.200" />
          </Svg>
          <h1 className="ml-[5px]">C:\ - XYplorer ### 30-Day Trial Version - Day 1 ### - 20.40</h1>
          <div className="ml-auto flex">
            <button aria-label="Minimize" className="flex h-[34px] w-[69px] items-center justify-center">
              <Svg className="size-[15px]" box="0 0 15 15">
                <path d="M0 7.500H15" stroke="#000" />
              </Svg>
            </button>
            <button aria-label="Restore" className="flex h-[34px] w-[69px] items-center justify-center">
              <Svg className="size-[15px]" box="0 0 15 15">
                <path d="M0.500 3.500H11.500V14.500H0.500ZM3.500 3.500V0.500H14.500V11.500H11.500" stroke="#000" />
              </Svg>
            </button>
            <button aria-label="Close" className="flex h-[34px] w-[69px] items-center justify-center">
              <Svg className="size-[15px]" box="0 0 15 15">
                <path d="M0 0 15 15M15 0 0 15" stroke="#000" strokeWidth="1.200" />
              </Svg>
            </button>
          </div>
        </div>
        <div className="flex h-7 items-center gap-3 pl-2">
          {menus.map((menu) => (
            <button key={menu}>{menu}</button>
          ))}
        </div>
      </header>

      <Toolbar />

      <div className="mb-0.5 flex h-[33px] gap-1 pr-0.5">
        <label className="flex flex-1 items-center bg-white pr-2.5 pl-[7px]">
          <DriveIcon windows />
          <input aria-label="Address" defaultValue="C:\" className="ml-[5px] flex-1 text-[18px] outline-none" />
          <Svg className="h-1.5 w-[11px]" box="0 0 11 6">
            <path d="M0.500 0.500 5.500 5 10.500 0.500" stroke="#333" strokeWidth="1.500" />
          </Svg>
        </label>
        <label className="flex w-[210px] items-center bg-white pl-1.5">
          <FunnelIcon color="#b0b0b0" className="size-[21px]" />
          <input aria-label="Live filter" className="min-w-0 flex-1 outline-none" />
        </label>
      </div>

      <main className="flex min-h-0 flex-1">
        <FolderTree />
        <div className="flex min-w-0 flex-1 flex-col pl-1">
          <div className="flex min-h-0 flex-1 flex-col gap-1">
            <Pane
              active
              current={{ name: 'C:\\', icon: <DriveIcon windows /> }}
              tabs={[
                { name: '文档', icon: <DocumentsIcon /> },
                { name: 'Downloads', icon: <DownloadsIcon /> },
                { name: 'LiuQB', icon: <UserIcon /> },
              ]}
              crumb="Win系统 (C:)"
              more
              rows={driveFiles}
            />
            <Pane
              active={false}
              current={{ name: '桌面', icon: <DesktopIcon /> }}
              tabs={[{ name: 'C:\\', icon: <DriveIcon windows /> }]}
              crumb="桌面"
              rows={desktopFiles}
            />
          </div>
          <StatusBar />
        </div>
      </main>

      {/* strip of the desktop left visible beside the window */}
      <div className="absolute inset-y-0 left-0 w-0.5 bg-[#454545]" />
    </div>
  );
}
